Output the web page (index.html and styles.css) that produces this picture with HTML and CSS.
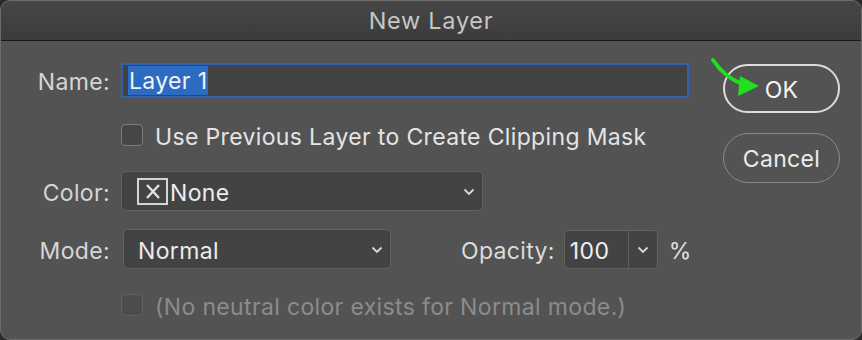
FILE: index.html
```html
<!DOCTYPE html>
<html>
<head>
<meta charset="utf-8">
<link rel="stylesheet" href="styles.css">
</head>
<body>
<div class="window">
  <div class="titlebar">New Layer</div>
  <div class="content">
    <div class="form">
      <div class="row row-name">
        <span class="label">Name:</span>
        <div class="text-input"><span class="sel">Layer 1</span></div>
      </div>
      <div class="row row-clip">
        <span class="label"></span>
        <span class="checkbox"></span>
        <span class="check-text">Use Previous Layer to Create Clipping Mask</span>
      </div>
      <div class="row row-color">
        <span class="label">Color:</span>
        <div class="select select-color">
          <span class="swatch"><svg width="26" height="23" viewBox="0 0 26 23"><path d="M7 5 L19 18 M19 5 L7 18" stroke="#e2e2e2" stroke-width="2.4" fill="none"/></svg></span>
          <span class="select-text">None</span>
          <svg class="chev" width="12" height="8" viewBox="0 0 12 8"><path d="M1.5 1.5 L6 6 L10.5 1.5" stroke="#d8d8d8" stroke-width="1.8" fill="none"/></svg>
        </div>
      </div>
      <div class="row row-mode">
        <span class="label">Mode:</span>
        <div class="select select-mode">
          <span class="select-text">Normal</span>
          <svg class="chev" width="12" height="8" viewBox="0 0 12 8"><path d="M1.5 1.5 L6 6 L10.5 1.5" stroke="#d8d8d8" stroke-width="1.8" fill="none"/></svg>
        </div>
        <span class="opacity-label">Opacity:</span>
        <div class="combo">
          <span class="combo-value">100</span>
          <span class="combo-btn"><svg width="12" height="8" viewBox="0 0 12 8"><path d="M1.5 1.5 L6 6 L10.5 1.5" stroke="#d8d8d8" stroke-width="1.8" fill="none"/></svg></span>
        </div>
        <span class="percent">%</span>
      </div>
      <div class="row row-neutral">
        <span class="label"></span>
        <span class="checkbox disabled"></span>
        <span class="check-text disabled-text">(No neutral color exists for Normal mode.)</span>
      </div>
    </div>
    <div class="buttons">
      <div class="btn btn-ok">OK</div>
      <div class="btn btn-cancel">Cancel</div>
    </div>
  </div>
  <svg class="arrow" width="60" height="50" viewBox="0 0 60 50">
    <path d="M4 4 C 12 16, 22 24, 34 28" stroke="#1fe01f" stroke-width="4" fill="none" stroke-linecap="round"/>
    <path d="M31 20 L50 30 L29 40 Z" fill="#1fe01f"/>
  </svg>
</div>
</body>
</html>
```

FILE: styles.css
```css
html, body {
  margin: 0;
  padding: 0;
  background: #2a2a2a;
}
body {
  width: 862px;
  height: 340px;
  overflow: hidden;
  font-family: Inter, "Noto Sans", sans-serif;
}
.window {
  position: relative;
  box-sizing: border-box;
  width: 862px;
  height: 340px;
  background: #535353;
  border: 1px solid #6c6c6c;
  border-radius: 10px;
  overflow: hidden;
  display: flex;
  flex-direction: column;
}
.titlebar {
  height: 40px;
  flex: none;
  box-sizing: border-box;
  background: linear-gradient(#464646, #3c3c3c);
  border-bottom: 1px solid #181818;
  color: #c6c6c6;
  font-size: 23.5px;
  letter-spacing: 0.7px;
  display: flex;
  align-items: center;
  justify-content: center;
  padding-bottom: 1px;
}
.content {
  display: flex;
  padding-top: 22px;
}
.form {
  width: 700px;
  display: flex;
  flex-direction: column;
}
.row {
  display: flex;
  align-items: center;
  font-size: 23px;
  letter-spacing: 0.35px;
  color: #dedede;
}
.label {
  width: 109px;
  flex: none;
  text-align: right;
  margin-right: 11px;
  color: #d6d6d6;
}
.label, .check-text, .select-text, .opacity-label, .percent, .combo-value {
  padding-top: 3px;
}
.row-name .label { padding-top: 2px; }
.row-name { height: 35px; }
.row-clip { height: 22px; margin-top: 26px; }
.row-color { height: 40px; margin-top: 25px; }
.row-mode { height: 40px; margin-top: 18px; }
.row-neutral { height: 22px; margin-top: 25px; }

.text-input {
  box-sizing: border-box;
  width: 568px;
  height: 35px;
  border: 2px solid #2f63b2;
  background: #424242;
  display: flex;
  align-items: center;
  padding-left: 5px;
}
.sel {
  background: #2c6bc1;
  color: #f2f2f2;
  box-sizing: border-box;
  height: 29px;
  line-height: 29px;
  padding: 1px 1px 0;
}
.checkbox {
  box-sizing: border-box;
  width: 22px;
  height: 22px;
  border: 1.5px solid #7c7c7c;
  border-radius: 4px;
  background: #464646;
  flex: none;
}
.checkbox.disabled {
  border-color: #616161;
  background: #4c4c4c;
}
.check-text {
  margin-left: 12px;
  color: #e4e4e4;
}
.disabled-text { color: #8c8c8c; }

.select {
  box-sizing: border-box;
  height: 40px;
  background: #434343;
  border: 1.5px solid #626262;
  border-radius: 5px;
  display: flex;
  align-items: center;
  color: #ececec;
}
.select-color {
  width: 362px;
  padding-left: 15px;
}
.swatch {
  box-sizing: border-box;
  width: 31px;
  height: 27px;
  border: 2px solid #d4d4d4;
  display: flex;
  align-items: center;
  justify-content: center;
  background: #444;
}
.select-color .select-text { margin-left: 2px; }
.select .chev { margin-left: auto; margin-right: 7px; margin-top: 2px; }
.select-mode {
  width: 268px;
  margin-left: 2px;
  padding-left: 14px;
}
.opacity-label {
  margin-left: 70px;
  color: #dcdcdc;
}
.combo {
  box-sizing: border-box;
  margin-left: 9px;
  width: 94px;
  height: 39px;
  border: 1.5px solid #626262;
  border-radius: 4px;
  background: #434343;
  display: flex;
}
.combo-value {
  width: 64px;
  padding-left: 5px;
  box-sizing: border-box;
  display: flex;
  align-items: center;
  color: #f0f0f0;
  border-right: 1.5px solid #5e5e5e;
}
.combo-btn {
  flex: 1;
  display: flex;
  align-items: center;
  justify-content: center;
  padding-top: 2px;
}
.percent {
  margin-left: 11px;
  color: #e0e0e0;
}

.buttons {
  margin-left: 22px;
  display: flex;
  flex-direction: column;
  gap: 20px;
  padding-top: 1px;
}
.btn {
  box-sizing: border-box;
  width: 117px;
  height: 49px;
  border-radius: 25px;
  display: flex;
  align-items: center;
  justify-content: center;
  font-size: 23px;
  letter-spacing: 0.35px;
  color: #ececec;
  background: #535353;
  padding-top: 2px;
}
.btn-ok {
  border: 2px solid #dcdcdc;
  color: #f4f4f4;
}
.btn-cancel {
  border: 1.5px solid #8a8a8a;
  height: 50px;
}
.arrow {
  position: absolute;
  left: 708px;
  top: 55px;
}
```
